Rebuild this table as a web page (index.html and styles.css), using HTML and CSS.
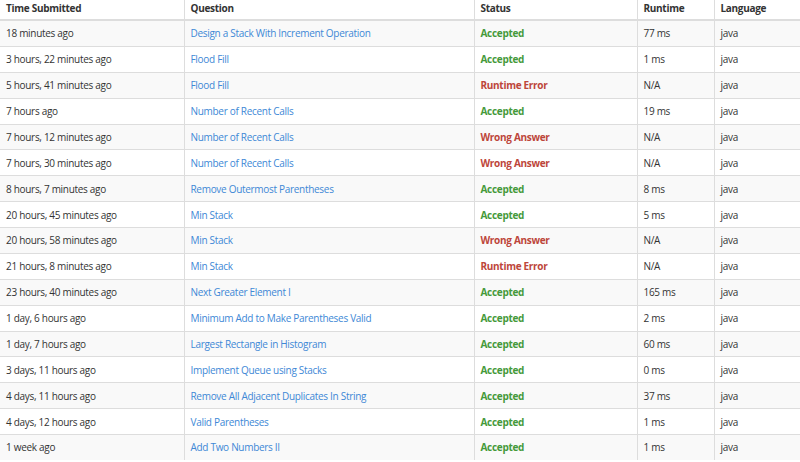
FILE: index.html
```html
<!DOCTYPE html>
<html>
<head>
<meta charset="utf-8">
<link rel="stylesheet" href="styles.css">
</head>
<body>
<table class="subs">
<colgroup>
<col class="c-time"><col class="c-q"><col class="c-status"><col class="c-rt"><col class="c-lang">
</colgroup>
<thead>
<tr><th>Time Submitted</th><th>Question</th><th>Status</th><th>Runtime</th><th>Language</th></tr>
</thead>
<tbody>
<tr><td>18 minutes ago</td><td><a href="#">Design a Stack With Increment Operation</a></td><td class="ok">Accepted</td><td>77 ms</td><td>java</td></tr>
<tr><td>3 hours, 22 minutes ago</td><td><a href="#">Flood Fill</a></td><td class="ok">Accepted</td><td>1 ms</td><td>java</td></tr>
<tr><td>5 hours, 41 minutes ago</td><td><a href="#">Flood Fill</a></td><td class="err">Runtime Error</td><td>N/A</td><td>java</td></tr>
<tr><td>7 hours ago</td><td><a href="#">Number of Recent Calls</a></td><td class="ok">Accepted</td><td>19 ms</td><td>java</td></tr>
<tr><td>7 hours, 12 minutes ago</td><td><a href="#">Number of Recent Calls</a></td><td class="err">Wrong Answer</td><td>N/A</td><td>java</td></tr>
<tr><td>7 hours, 30 minutes ago</td><td><a href="#">Number of Recent Calls</a></td><td class="err">Wrong Answer</td><td>N/A</td><td>java</td></tr>
<tr><td>8 hours, 7 minutes ago</td><td><a href="#">Remove Outermost Parentheses</a></td><td class="ok">Accepted</td><td>8 ms</td><td>java</td></tr>
<tr><td>20 hours, 45 minutes ago</td><td><a href="#">Min Stack</a></td><td class="ok">Accepted</td><td>5 ms</td><td>java</td></tr>
<tr><td>20 hours, 58 minutes ago</td><td><a href="#">Min Stack</a></td><td class="err">Wrong Answer</td><td>N/A</td><td>java</td></tr>
<tr><td>21 hours, 8 minutes ago</td><td><a href="#">Min Stack</a></td><td class="err">Runtime Error</td><td>N/A</td><td>java</td></tr>
<tr><td>23 hours, 40 minutes ago</td><td><a href="#">Next Greater Element I</a></td><td class="ok">Accepted</td><td>165 ms</td><td>java</td></tr>
<tr><td>1 day, 6 hours ago</td><td><a href="#">Minimum Add to Make Parentheses Valid</a></td><td class="ok">Accepted</td><td>2 ms</td><td>java</td></tr>
<tr><td>1 day, 7 hours ago</td><td><a href="#">Largest Rectangle in Histogram</a></td><td class="ok">Accepted</td><td>60 ms</td><td>java</td></tr>
<tr><td>3 days, 11 hours ago</td><td><a href="#">Implement Queue using Stacks</a></td><td class="ok">Accepted</td><td>0 ms</td><td>java</td></tr>
<tr><td>4 days, 11 hours ago</td><td><a href="#">Remove All Adjacent Duplicates In String</a></td><td class="ok">Accepted</td><td>37 ms</td><td>java</td></tr>
<tr><td>4 days, 12 hours ago</td><td><a href="#">Valid Parentheses</a></td><td class="ok">Accepted</td><td>1 ms</td><td>java</td></tr>
<tr><td>1 week ago</td><td><a href="#">Add Two Numbers II</a></td><td class="ok">Accepted</td><td>1 ms</td><td>java</td></tr>
</tbody>
</table>
</body>
</html>
```

FILE: styles.css
```css
html, body {
  margin: 0;
  padding: 0;
  background: #fff;
}
body {
  font-family: "Open Sans", "Noto Sans", sans-serif;
  font-size: 10px;
  letter-spacing: -0.3px;
  color: #333;
  overflow: hidden;
}
.subs {
  width: 800px;
  border-collapse: collapse;
  table-layout: fixed;
}
.c-time { width: 184px; }
.c-q { width: 290px; }
.c-status { width: 163px; }
.c-rt { width: 77px; }
.c-lang { width: 86px; }
.subs th, .subs td {
  text-align: left;
  line-height: 14px;
  padding: 5.44px 6px;
  border-left: 1px solid #ddd;
  white-space: nowrap;
}
.subs th:first-child, .subs td:first-child {
  border-left: none;
}
.subs th {
  font-weight: 700;
  padding-top: 1px;
  padding-bottom: 4px;
  border-bottom: 2px solid #ddd;
}
.subs td {
  border-top: 1px solid #ddd;
}
.subs tbody tr:nth-child(odd) {
  background: #f9f9f9;
}
.subs a {
  color: #4088d6;
  text-decoration: none;
}
.ok {
  color: #459a3b;
  font-weight: 700;
}
.err {
  color: #bd463b;
  font-weight: 700;
}
```
